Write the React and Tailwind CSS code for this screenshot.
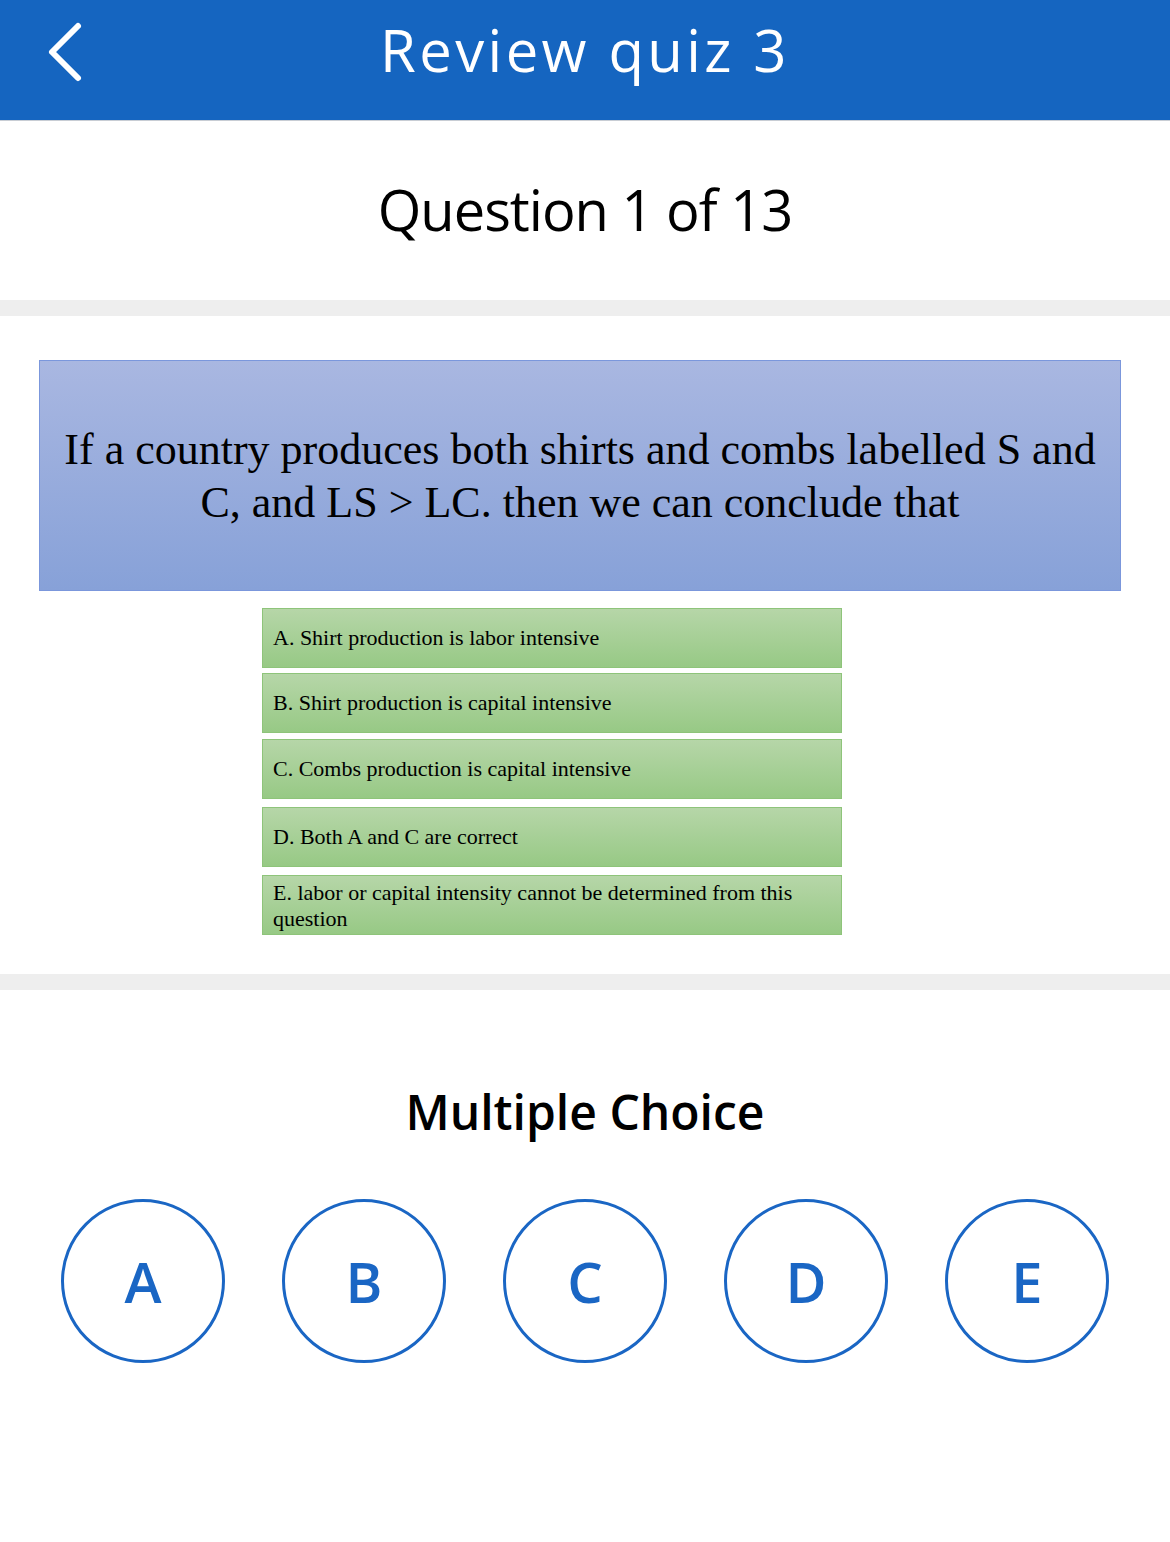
import React from 'react';

const options = [
  { text: 'A. Shirt production is labor intensive', mt: 'mt-[17px]' },
  { text: 'B. Shirt production is capital intensive', mt: 'mt-[5px]' },
  { text: 'C. Combs production is capital intensive', mt: 'mt-[6px]' },
  { text: 'D. Both A and C are correct', mt: 'mt-[8px]' },
];

const letters = ['A', 'B', 'C', 'D', 'E'];

function BackIcon() {
  return (
    <svg width="40" height="64" viewBox="0 0 40 64" fill="none">
      <path d="M32 6 L6 32 L32 58" stroke="white" strokeWidth="6" strokeLinecap="round" strokeLinejoin="round" />
    </svg>
  );
}

export default function App() {
  return (
    <div className="min-h-[1542px] bg-white font-['Open_Sans',sans-serif]">
      {/* header */}
      <div className="relative h-[121px] bg-[#1565c0] border-b border-[#c8cdd4] flex items-center justify-center">
        <button type="button" className="absolute left-[46px] top-[20px]">
          <BackIcon />
        </button>
        <h1 className="text-white text-[58px] font-normal tracking-[3.4px] leading-none -mt-[20px]">Review quiz 3</h1>
      </div>

      <div className="h-[179px] flex items-center justify-center">
        <h2 className="text-black text-[56px] leading-none tracking-[-1px] -mt-[3px]">Question 1 of 13</h2>
      </div>

      <div className="h-[16px] bg-[#eeeeee]" />

      {/* question image */}
      <div className="pt-[44px] pb-[39px] flex flex-col items-center">
        <div className="w-[1082px] h-[231px] ml-[-10px] border border-[#7b97dc] bg-gradient-to-b from-[#a9b7e1] to-[#87a1d8] flex items-center justify-center">
          <p className="text-center text-black text-[44px] leading-[53px] font-['Liberation_Serif',serif]">
            If a country produces both shirts and combs labelled S and
            <br />
            C, and LS &gt; LC. then we can conclude that
          </p>
        </div>
        <div className="w-[580px] ml-[-66px] flex flex-col">
          {options.map((o) => (
            <div
              key={o.text}
              className={`${o.mt} h-[60px] border border-[#8ec47a] bg-gradient-to-b from-[#b6d6a8] to-[#97c985] px-[10px] flex items-center`}
            >
              <span className="text-black text-[22px] font-['Liberation_Serif',serif] leading-none">{o.text}</span>
            </div>
          ))}
          <div className="mt-[8px] h-[60px] border border-[#8ec47a] bg-gradient-to-b from-[#b6d6a8] to-[#97c985] px-[10px] pt-[4px]">
            <span className="text-black text-[22px] font-['Liberation_Serif',serif] leading-[26px]">
              E. labor or capital intensity cannot be determined from this
              <br />
              question
            </span>
          </div>
        </div>
      </div>

      <div className="h-[16px] bg-[#eeeeee]" />

      {/* answer */}
      <div className="pt-[98px] flex flex-col items-center">
        <h3 className="text-black text-[48px] font-semibold leading-none">Multiple Choice</h3>
        <div className="mt-[63px] flex gap-[57px]">
          {letters.map((l) => (
            <button
              key={l}
              type="button"
              className="w-[164px] h-[164px] rounded-full border-[3px] border-[#1a66c4] flex items-center justify-center text-[#1a66c4] text-[56px] font-semibold leading-none"
            >
              {l}
            </button>
          ))}
        </div>
      </div>
    </div>
  );
}
